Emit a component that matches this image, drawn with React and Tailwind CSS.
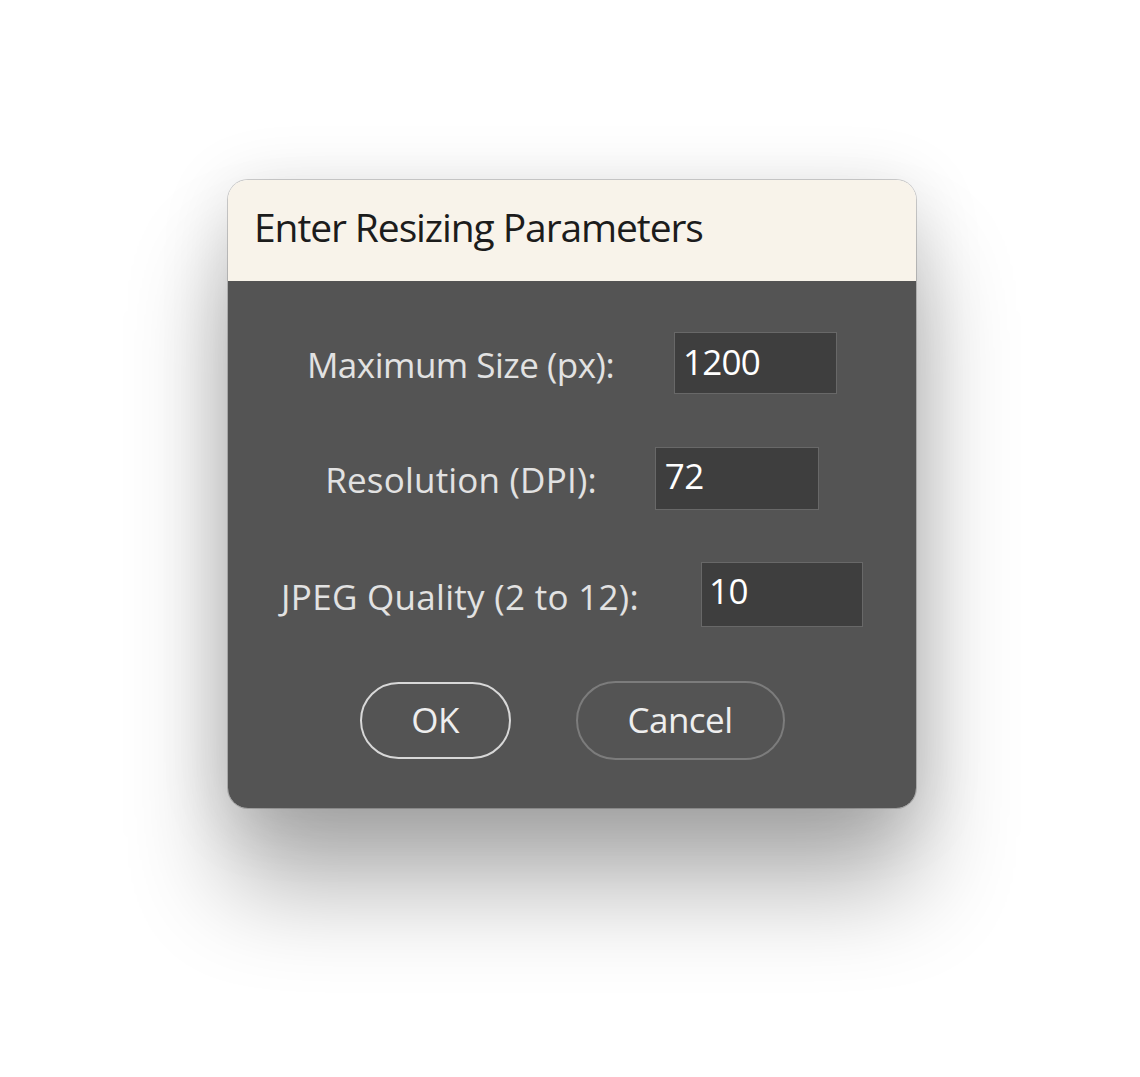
export default function App() {
  const font = { fontFamily: '"Open Sans", "Noto Sans", sans-serif' };
  return (
    <div className="w-[1140px] h-[1077px] bg-white flex justify-center pt-[180px] pl-[4px]" style={font}>
      <div className="w-[688px] h-[628px] rounded-[20px] overflow-hidden flex flex-col shadow-[0_0_0_1px_rgba(0,0,0,0.18),0_80px_100px_rgba(0,0,0,0.3),0_10px_70px_rgba(0,0,0,0.14)]">
        <div className="h-[101px] bg-[#f8f3ea] flex items-center pl-[26px] pb-[6px]">
          <span className="text-[39px] text-[#1c1c1c] tracking-[-1.1px]">Enter Resizing Parameters</span>
        </div>
        <div className="flex-1 bg-[#545454] flex flex-col items-center pt-[51px]">
          <div className="flex items-center gap-[60px] h-[62px]">
            <span className="text-[35px] text-[#e2e2e2] tracking-[-0.5px] pt-[4px]">Maximum Size (px):</span>
            <div className="w-[163px] h-[62px] bg-[#3e3e3e] border border-[#686868] flex items-center pl-[8px] pb-[2px] text-[35px] text-white tracking-[-0.8px]">1200</div>
          </div>
          <div className="flex items-center gap-[58px] h-[63px] mt-[53px]">
            <span className="text-[35px] text-[#e2e2e2] tracking-[0.2px] pt-[4px]">Resolution (DPI):</span>
            <div className="w-[164px] h-[63px] bg-[#3e3e3e] border border-[#686868] flex items-center pl-[9px] pb-[4px] text-[35px] text-white tracking-[-0.5px]">72</div>
          </div>
          <div className="flex items-center gap-[62px] h-[65px] mt-[52px]">
            <span className="text-[35px] text-[#e2e2e2] tracking-[0.3px] pt-[6px]">JPEG Quality (2 to 12):</span>
            <div className="w-[162px] h-[65px] bg-[#3e3e3e] border border-[#686868] flex items-center pl-[7px] pb-[6px] text-[35px] text-white tracking-[-0.5px]">10</div>
          </div>
          <div className="flex items-center gap-[65px] mt-[54px]">
            <button className="w-[151px] h-[77px] rounded-full border-2 border-[#d8d8d8] text-[35px] text-[#eeeeee] tracking-[-0.5px]">OK</button>
            <button className="w-[209px] h-[79px] rounded-full border-2 border-[#7c7c7c] text-[35px] text-[#eeeeee] tracking-[-0.5px]">Cancel</button>
          </div>
        </div>
      </div>
    </div>
  );
}
